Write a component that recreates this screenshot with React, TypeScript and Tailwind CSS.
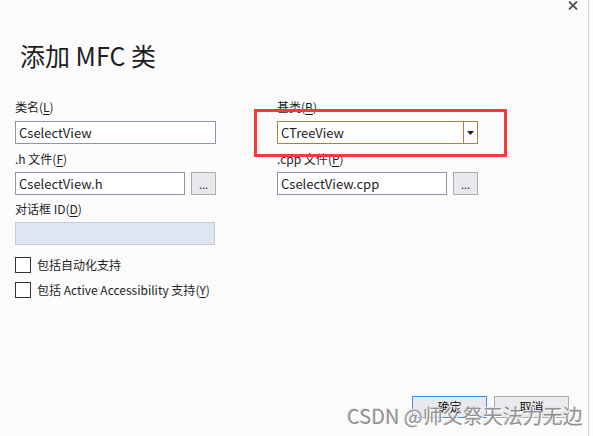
const FONT = { fontFamily: '"Noto Sans CJK SC", "Noto Sans", sans-serif' };

function Mn({ c }: { c: string }) {
  return (
    <>
      (<span className="underline underline-offset-[2px]">{c}</span>)
    </>
  );
}

function Label({ children, className = '' }: { children: React.ReactNode; className?: string }) {
  return <div className={`h-[18px] text-[12px] leading-[18px] text-[#1e1e1e] ${className}`}>{children}</div>;
}

function TextBox({ value, className = '' }: { value: string; className?: string }) {
  return (
    <div
      className={`h-[23px] border border-[#8a96ab] bg-white px-[3px] text-[13px] leading-[21px] text-[#1e1e1e] ${className}`}
    >
      {value}
    </div>
  );
}

function BrowseButton() {
  return (
    <div className="flex h-[23px] w-[25px] items-end justify-center border border-[#adadad] bg-[#e8e8ec] pb-[4px] text-[11px] leading-[11px] text-[#1e1e1e]">
      ...
    </div>
  );
}

function CheckRow({ children, className = '' }: { children: React.ReactNode; className?: string }) {
  return (
    <div className={`flex items-center ${className}`}>
      <div className="h-[16px] w-[16px] border border-[#333] bg-white" />
      <span className="ml-[6px] text-[12px] leading-[16px] text-[#1e1e1e]">{children}</span>
    </div>
  );
}

export default function App() {
  return (
    <div className="relative h-[436px] w-[593px] overflow-hidden bg-[#fbfbfb]" style={FONT}>
      <div className="flex h-full w-[589px] flex-col border-r border-[#d3d3da]">
        {/* Title */}
        <h1 className="ml-[20px] mt-[39px] text-[25px] leading-[32px] font-normal text-[#1e1e1e]">添加 MFC 类</h1>

        {/* Fields */}
        <div className="ml-[15px] mt-[27px] grid grid-cols-[201px_201px] gap-x-[61px]">
          <div className="flex flex-col">
            <Label>
              类名<Mn c="L" />
            </Label>
            <TextBox value="CselectView" className="mt-[5px] w-[201px]" />
            <Label className="mt-[6px]">
              .h 文件<Mn c="F" />
            </Label>
            <div className="mt-[4px] flex gap-[6px]">
              <TextBox value="CselectView.h" className="w-[170px]" />
              <BrowseButton />
            </div>
            <Label className="mt-[5px]">
              对话框 ID<Mn c="D" />
            </Label>
            <div className="mt-[4px] h-[23px] w-[200px] border border-[#c3cbd8] bg-[#dfe6f2]" />
            <CheckRow className="mt-[12px]">包括自动化支持</CheckRow>
            <CheckRow className="mt-[9px] whitespace-nowrap">
              包括 Active Accessibility 支持<Mn c="Y" />
            </CheckRow>
          </div>

          <div className="flex flex-col">
            <Label>
              基类<Mn c="B" />
            </Label>
            <div className="mt-[5px] flex h-[23px] w-[201px] border border-[#a8843e] bg-white">
              <div className="flex-1 px-[3px] text-[13px] leading-[21px] text-[#1e1e1e]">CTreeView</div>
              <div className="flex w-[14px] items-center justify-center border-l border-[#a8843e]">
                <svg width="7" height="4" viewBox="0 0 7 4">
                  <path d="M0 0h7L3.5 4z" fill="#1e1e1e" />
                </svg>
              </div>
            </div>
            <Label className="mt-[6px]">
              .cpp 文件<Mn c="P" />
            </Label>
            <div className="mt-[4px] flex gap-[6px]">
              <TextBox value="CselectView.cpp" className="w-[170px]" />
              <BrowseButton />
            </div>
          </div>
        </div>

        {/* Buttons */}
        <div className="mt-auto mb-[18px] mr-[19px] flex justify-end gap-[7px]">
          <div className="flex h-[22px] w-[75px] items-center justify-center border border-[#3d8ee6] bg-[#e8e8ee] text-[12px] text-[#111]">
            确定
          </div>
          <div className="flex h-[22px] w-[75px] items-center justify-center border border-[#adadad] bg-[#ebebef] text-[12px] text-[#111]">
            取消
          </div>
        </div>
      </div>

      {/* Close glyph */}
      <svg className="absolute left-[568px] top-[1px]" width="10" height="9" viewBox="0 0 10 9">
        <path d="M1 0.5L9 8.5M9 0.5L1 8.5" stroke="#555" strokeWidth="1.8" />
      </svg>

      {/* Red highlight annotation */}
      <div className="pointer-events-none absolute left-[254px] top-[109px] h-[48px] w-[253px] border-[3px] border-[#f23c3c]" />

      {/* Watermark */}
      <div
        className="pointer-events-none absolute left-[347px] top-[403px] whitespace-nowrap text-[20px] leading-[26px] text-[#929292]"
        style={{ textShadow: '1px 1px 0 #ffffff, -1px -1px 0 #e4e4e4' }}
      >
        CSDN @师父祭天法力无边
      </div>
    </div>
  );
}
